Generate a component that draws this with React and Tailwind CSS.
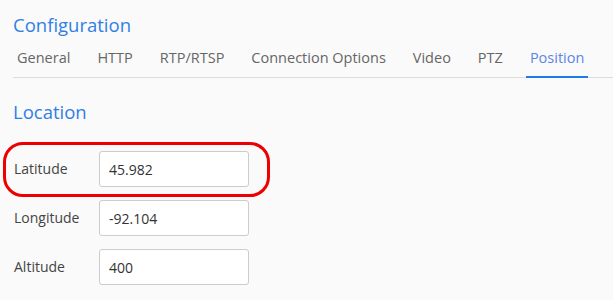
import React from 'react';

const tabs = ['General', 'HTTP', 'RTP/RTSP', 'Connection Options', 'Video', 'PTZ', 'Position'];

const fields = [
    { label: 'Latitude', value: '45.982', highlight: true },
    { label: 'Longitude', value: '-92.104' },
    { label: 'Altitude', value: '400' },
];

export default function App() {
    return (
        <div className="min-h-screen bg-[#fafafa] pl-[13px] pt-[9px] font-['Open_Sans',sans-serif]">
            {/* HEADER */}
            <h1 className="text-[18.5px] leading-[32px] text-[#2f7fe6]">Configuration</h1>

            {/* TABS */}
            <nav className="flex gap-[19px] border-b border-[#dddddd]">
                {tabs.map(tab => {
                    const active = tab === 'Position';
                    return (
                        <div
                            key={tab}
                            className={
                                active
                                    ? '-mb-px px-[4px] pt-[7px] pb-[8px] text-[14.5px] leading-[20px] text-[#5b86e8] border-b-2 border-[#1f7be6]'
                                    : '-mb-px px-[4px] pt-[7px] pb-[8px] text-[14.5px] leading-[20px] text-[#666666] border-b-2 border-transparent'
                            }
                        >
                            {tab}
                        </div>
                    );
                })}
            </nav>

            {/* LOCATION */}
            <h2 className="mt-[18px] text-[18.5px] leading-[32px] text-[#2f7fe6]">Location</h2>

            <div className="mt-[23px] flex flex-col gap-[13px]">
                {fields.map(f => (
                    <div key={f.label} className="relative flex items-center">
                        <label className="w-[86px] pl-px text-[14px] leading-[20px] text-[#444444]">{f.label}</label>
                        <div className="w-[150px] h-[36px] flex items-center pl-[9px] bg-white border border-[#cccccc] rounded-[3px] text-[14px] text-[#333333]">
                            {f.value}
                        </div>
                        {f.highlight && (
                            <div className="absolute left-[-10px] top-[-9px] w-[267px] h-[55px] border-[3.5px] border-[#ee0000] rounded-[20px] pointer-events-none" />
                        )}
                    </div>
                ))}
            </div>
        </div>
    );
}
